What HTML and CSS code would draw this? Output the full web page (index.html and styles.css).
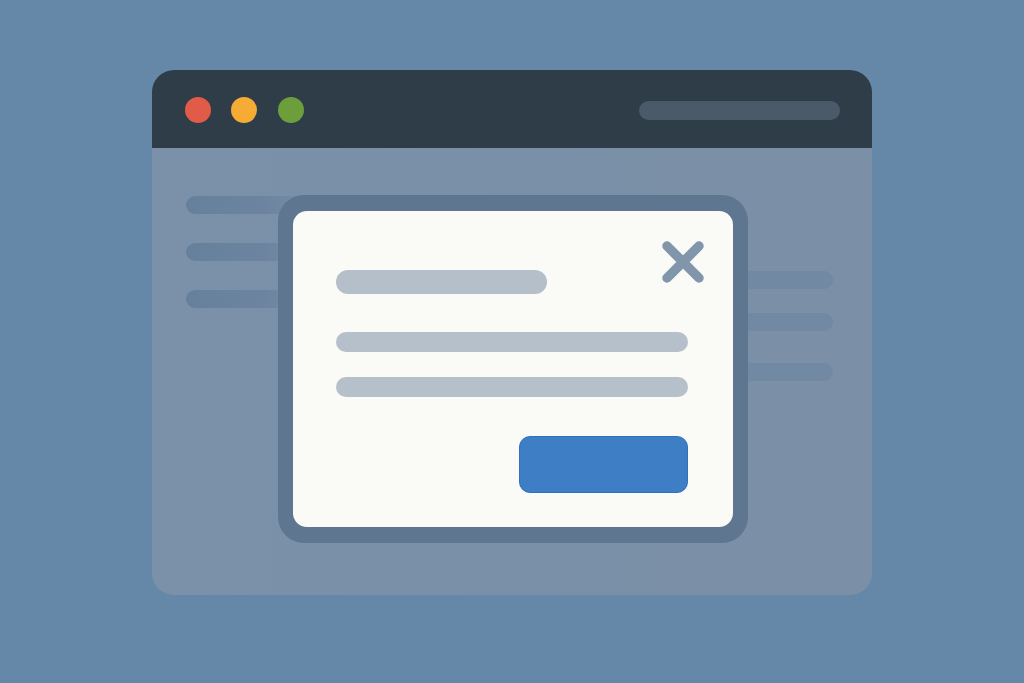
FILE: index.html
```html
<!DOCTYPE html>
<html>
<head>
<meta charset="utf-8">
<link rel="stylesheet" href="styles.css">
</head>
<body>
<div class="window">
  <div class="titlebar">
    <div class="dots">
      <span class="dot red"></span>
      <span class="dot yellow"></span>
      <span class="dot green"></span>
    </div>
    <div class="address"></div>
  </div>
  <div class="content">
    <div class="col-left">
      <div class="bg-line"></div>
      <div class="bg-line"></div>
      <div class="bg-line"></div>
    </div>
    <div class="col-right">
      <div class="bg-line r1"></div>
      <div class="bg-line r2"></div>
      <div class="bg-line r3"></div>
    </div>
    <div class="modal-frame">
      <div class="modal">
        <div class="modal-head">
          <div class="title-line"></div>
          <svg class="close" width="42" height="42" viewBox="0 0 42 42">
            <path d="M5 5 L37 37 M37 5 L5 37" stroke="#8196ab" stroke-width="9.5" stroke-linecap="round" fill="none"/>
          </svg>
        </div>
        <div class="text-line first"></div>
        <div class="text-line second"></div>
        <div class="actions">
          <div class="btn"></div>
        </div>
      </div>
    </div>
  </div>
</div>
</body>
</html>
```

FILE: styles.css
```css
html, body {
  margin: 0;
  padding: 0;
}
body {
  width: 1024px;
  height: 683px;
  background: #6588a9;
  overflow: hidden;
  font-family: "Liberation Sans", sans-serif;
}
.window {
  margin: 70px 0 0 152px;
  width: 720px;
  height: 525px;
  border-radius: 22px;
  overflow: hidden;
  background: linear-gradient(90deg, #7b91a9 0%, #7a90a8 50%, #7b90a6 100%);
  display: flex;
  flex-direction: column;
}
.titlebar {
  height: 78px;
  background: #2f3d48;
  display: flex;
  align-items: center;
  justify-content: space-between;
  padding: 0 32px 0 32px;
  flex-shrink: 0;
}
.dots {
  display: flex;
  gap: 20.5px;
  margin-top: 2px;
  margin-left: 0.5px;
}
.dot {
  width: 26px;
  height: 26px;
  border-radius: 50%;
  display: block;
}
.red { background: #e25a48; }
.yellow { background: #f6ac34; }
.green { background: #6c9e3c; }
.address {
  width: 201px;
  height: 19px;
  border-radius: 10px;
  background: #4a5a68;
  margin-top: 2px;
}
.content {
  position: relative;
  flex: 1;
  display: flex;
  justify-content: space-between;
}
.col-left {
  padding: 48px 0 0 34px;
  display: flex;
  flex-direction: column;
  gap: 29px;
}
.col-left .bg-line {
  width: 130px;
  height: 18px;
  border-radius: 9px;
  background: linear-gradient(90deg, #66809b 0%, #6c849f 60%, #7a90a8 100%);
}
.col-right {
  padding: 123px 39px 0 0;
  display: flex;
  flex-direction: column;
  align-items: flex-end;
}
.col-right .bg-line {
  width: 130px;
  height: 18px;
  border-radius: 9px;
  background: #7189a2;
}
.col-right .r2 { margin-top: 24px; }
.col-right .r3 { margin-top: 32px; }
.modal-frame {
  position: absolute;
  left: 126px;
  top: 47px;
  width: 440px;
  height: 316px;
  padding: 16px 15px;
  background: #5f7690;
  border-radius: 26px;
}
.modal {
  width: 440px;
  height: 316px;
  box-sizing: border-box;
  background: #fafaf7;
  border-radius: 14px;
  padding: 30px 45px 0 43px;
  display: flex;
  flex-direction: column;
}
.modal-head {
  display: flex;
  justify-content: space-between;
  align-items: flex-start;
}
.title-line {
  margin-top: 29px;
  width: 211px;
  height: 24px;
  border-radius: 12px;
  background: #b4bfca;
}
.close {
  display: block;
  margin-right: -16px;
}
.text-line {
  width: 352px;
  height: 20px;
  border-radius: 10px;
  background: #b5c0cb;
}
.text-line.first { margin-top: 38px; }
.text-line.second { margin-top: 25px; }
.actions {
  margin-top: 39px;
  display: flex;
  justify-content: flex-end;
}
.btn {
  width: 169px;
  height: 57px;
  box-sizing: border-box;
  border-radius: 11px;
  background: #3d7ec5;
  border: 1px solid #3070be;
}
```
